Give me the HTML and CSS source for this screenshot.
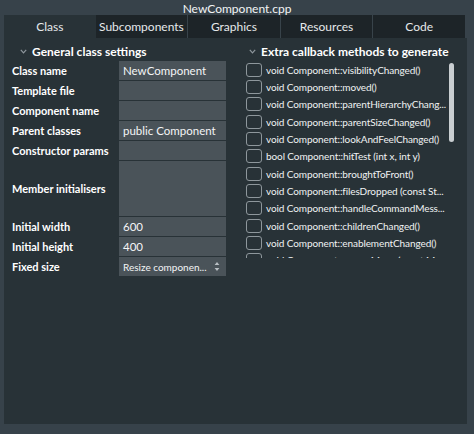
FILE: index.html
```html
<!DOCTYPE html>
<html lang="en">
<head>
    <meta charset="UTF-8">
    <title>NewComponent.cpp</title>
    <link rel="stylesheet" href="styles.css">
</head>
<body>
    <div class="title">NewComponent.cpp</div>
    <div class="tabs">
        <div class="tab active">Class</div>
        <div class="tab">Subcomponents</div>
        <div class="tab">Graphics</div>
        <div class="tab">Resources</div>
        <div class="tab">Code</div>
    </div>
    <div class="panel">
        <div class="section settings">
            <div class="section-head">
                <svg class="chevron" width="7" height="5" viewBox="0 0 7 5"><path d="M0.8 0.8 L3.5 3.8 L6.2 0.8" fill="none" stroke="#8e979d" stroke-width="1.2"/></svg>
                General class settings
            </div>
            <div class="props">
                <div class="prop"><label>Class name</label><div class="field">NewComponent</div></div>
                <div class="prop"><label>Template file</label><div class="field"></div></div>
                <div class="prop"><label>Component name</label><div class="field"></div></div>
                <div class="prop"><label>Parent classes</label><div class="field">public Component</div></div>
                <div class="prop"><label>Constructor params</label><div class="field"></div></div>
                <div class="prop tall"><label>Member initialisers</label><div class="field"></div></div>
                <div class="prop"><label>Initial width</label><div class="field">600</div></div>
                <div class="prop"><label>Initial height</label><div class="field">400</div></div>
                <div class="prop">
                    <label>Fixed size</label>
                    <div class="field combo">
                        <span>Resize componen...</span>
                        <svg width="6" height="11" viewBox="0 0 6 11"><path d="M0.6 4 L3 1 L5.4 4 Z M0.6 7 L3 10 L5.4 7 Z" fill="#b9bfc3"/></svg>
                    </div>
                </div>
            </div>
        </div>
        <div class="section callbacks">
            <div class="section-head">
                <svg class="chevron" width="7" height="5" viewBox="0 0 7 5"><path d="M0.8 0.8 L3.5 3.8 L6.2 0.8" fill="none" stroke="#8e979d" stroke-width="1.2"/></svg>
                Extra callback methods to generate
            </div>
            <div class="list">
                <div class="item"><span class="box"></span>void Component::visibilityChanged()</div>
                <div class="item"><span class="box"></span>void Component::moved()</div>
                <div class="item"><span class="box"></span>void Component::parentHierarchyChang...</div>
                <div class="item"><span class="box"></span>void Component::parentSizeChanged()</div>
                <div class="item"><span class="box"></span>void Component::lookAndFeelChanged()</div>
                <div class="item"><span class="box"></span>bool Component::hitTest (int x, int y)</div>
                <div class="item"><span class="box"></span>void Component::broughtToFront()</div>
                <div class="item"><span class="box"></span>void Component::filesDropped (const St...</div>
                <div class="item"><span class="box"></span>void Component::handleCommandMess...</div>
                <div class="item"><span class="box"></span>void Component::childrenChanged()</div>
                <div class="item"><span class="box"></span>void Component::enablementChanged()</div>
                <div class="item"><span class="box"></span>void Component::mouseMove (const Mo...</div>
                <div class="scrollbar"></div>
            </div>
        </div>
    </div>
</body>
</html>
```

FILE: styles.css
```css
body {
    margin: 0;
    width: 474px;
    height: 434px;
    background: #37424a;
    color: #fff;
    font-family: Lato, "Open Sans", sans-serif;
    overflow: hidden;
}

.title {
    height: 15px;
    line-height: 17px;
    text-align: center;
    font-size: 12px;
    color: #f2f4f5;
}

.tabs {
    display: flex;
    margin: 0 9px 0 4px;
    height: 23px;
}
.tab {
    flex: 1;
    background: #1d2428;
    border-left: 1px solid #38434a;
    text-align: center;
    font-size: 12px;
    line-height: 23px;
    color: #e6e9eb;
}
.tab:first-child {
    border-left: none;
}
.tab.active {
    background: #283237;
}
.tab.active + .tab {
    border-left: none;
}

.panel {
    display: flex;
    margin: 0 7px 0 4px;
    height: 386px;
    background: #283237;
}

.section-head {
    display: flex;
    align-items: center;
    height: 23px;
    padding-top: 4px;
    font-weight: bold;
    font-size: 12px;
    box-sizing: border-box;
    white-space: nowrap;
}
.chevron {
    margin-right: 5px;
}

.settings {
    width: 236px;
}
.settings .section-head {
    padding-left: 16px;
}
.props {
    display: flex;
    flex-direction: column;
    gap: 1px;
    padding-left: 8px;
}
.prop {
    display: flex;
    height: 19px;
    align-items: stretch;
}
.prop.tall {
    height: 55px;
}
.prop label {
    width: 107px;
    font-size: 11px;
    font-weight: bold;
    display: flex;
    align-items: center;
    white-space: nowrap;
}
.field {
    width: 107px;
    background: #4a5359;
    font-size: 11.5px;
    padding-left: 4px;
    box-sizing: border-box;
    display: flex;
    align-items: center;
    white-space: nowrap;
    overflow: hidden;
    color: #f4f5f6;
}
.field.combo {
    font-size: 10px;
    justify-content: space-between;
    padding-right: 6px;
}

.callbacks {
    width: 227px;
}
.callbacks .section-head {
    padding-left: 9px;
}
.list {
    position: relative;
    height: 197px;
    overflow: hidden;
}
.item {
    display: flex;
    align-items: center;
    height: 17.33px;
    font-size: 10px;
    letter-spacing: -0.1px;
    white-space: nowrap;
    color: #f0f2f3;
}
.box {
    width: 14px;
    height: 12px;
    margin: 0 4px 0 6px;
    border: 1px solid #8e979c;
    border-radius: 3px;
    flex: none;
}
.scrollbar {
    position: absolute;
    left: 209px;
    top: 2px;
    width: 5px;
    height: 79px;
    border-radius: 3px;
    background: #c9ced1;
}
```
